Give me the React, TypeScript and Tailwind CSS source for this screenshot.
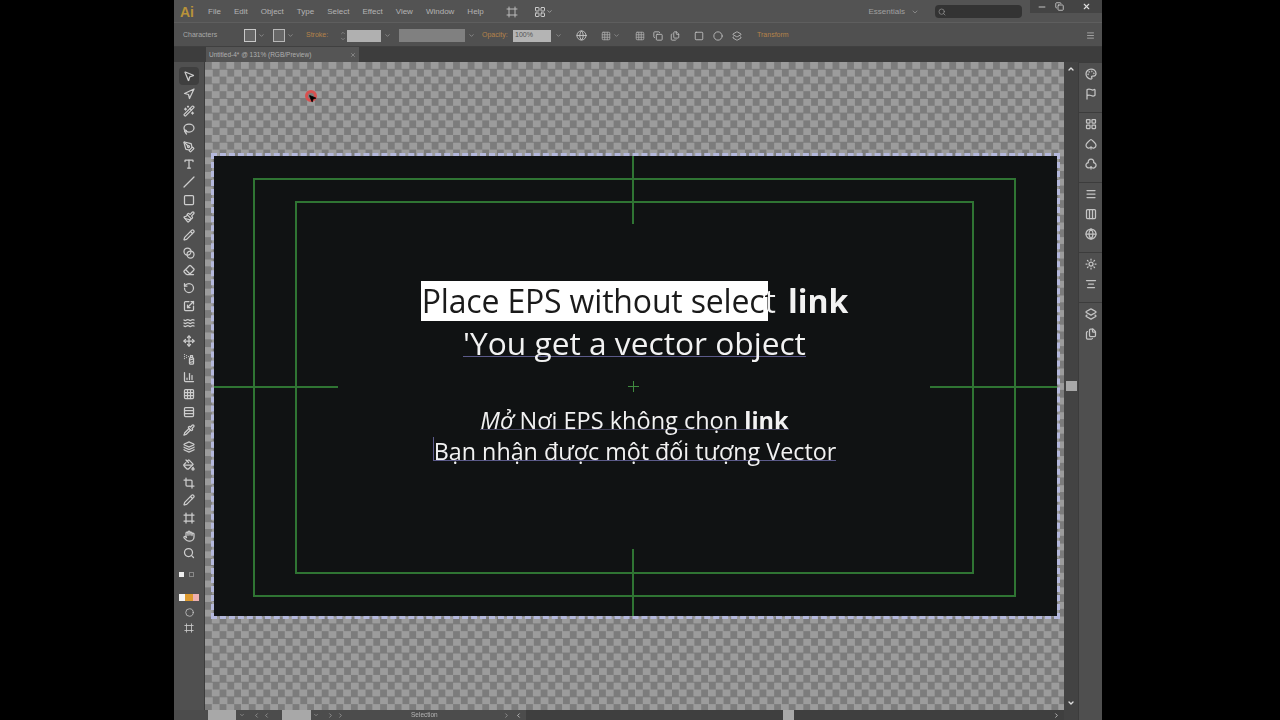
import {
  MousePointer2, Navigation, Wand2, Lasso, PenTool, Type, Slash, Square, Paintbrush, Pencil, Blend,
  Eraser, RotateCcw, Scaling, Waves, Move, SprayCan, BarChart3, Grid3x3, Rows3, Pipette, Layers, PaintBucket,
  Crop, Frame, Hand, Search, ChevronDown, Minus, X, Copy, Globe, LayoutGrid, ChevronLeft, ChevronRight,
  Circle, Palette, Flag, Spade, Club, Menu, Columns3, Sun, AlignCenter, Layers2, Files, ChevronUp,
} from "lucide-react";

const menus = ["File", "Edit", "Object", "Type", "Select", "Effect", "View", "Window", "Help"];

const tools = [
  MousePointer2, Navigation, Wand2, Lasso, PenTool, Type, Slash, Square, Paintbrush, Pencil, Blend, Eraser,
  RotateCcw, Scaling, Waves, Move, SprayCan, BarChart3, Grid3x3, Rows3, Pipette, Layers, PaintBucket, Crop,
  Pencil, Frame, Hand, Search,
];

const panelGroups = [
  [Palette, Flag],
  [LayoutGrid, Spade, Club],
  [Menu, Columns3, Globe],
  [Sun, AlignCenter],
  [Layers2, Files],
];

function MenuBar() {
  return (
    <div className="flex h-[22px] items-center bg-[#535353] pt-[1px] text-[8px] text-[#b4b4b4]">
      <span className="ml-[6px] w-[28px] text-[14px] font-bold leading-none text-[#b8923a]">Ai</span>
      <div className="flex gap-[13px]">
        {menus.map((m) => (
          <span key={m}>{m}</span>
        ))}
      </div>
      <Frame size={12} className="ml-[22px] text-[#bbbbbb]" />
      <LayoutGrid size={12} className="ml-[16px] text-[#cccccc]" />
      <ChevronDown size={7} className="text-[#cccccc]" />
      <span className="ml-auto text-[#a0a0a0]">Essentials</span>
      <ChevronDown size={8} className="ml-[6px] text-[#a0a0a0]" />
      <div className="ml-[16px] flex h-[13px] w-[87px] items-center rounded-sm bg-[#333333] pl-[3px]">
        <Search size={8} className="text-[#999999]" />
      </div>
      <div className="mb-[10px] ml-[8px] flex h-[13px] w-[72px] items-center bg-[#444444] text-[#dddddd]">
        <Minus size={10} className="ml-[7px]" />
        <Copy size={9} className="ml-[8px]" />
        <X size={9} strokeWidth={3} className="ml-[18px]" />
      </div>
    </div>
  );
}

function ControlBar() {
  return (
    <div className="flex h-[24px] items-center border-t border-[#5e5e5e] bg-[#505050] pt-[2px] text-[7px] text-[#a8a8a8]">
      <span className="ml-[9px] w-[61px]">Characters</span>
      <span className="h-[13px] w-[12px] border border-[#c8c8c8] bg-[#666666]" />
      <ChevronDown size={7} className="ml-[2px]" />
      <span className="ml-[8px] h-[13px] w-[12px] border border-[#b8b8b8] bg-[#666666]" />
      <ChevronDown size={7} className="ml-[2px]" />
      <span className="ml-[12px] w-[32px] text-[#b5834a]">Stroke:</span>
      <span className="flex w-[9px] flex-col items-center">
        <ChevronUp size={6} />
        <ChevronDown size={6} />
      </span>
      <span className="h-[12px] w-[34px] bg-[#b0b0b0]" />
      <ChevronDown size={7} className="ml-[3px]" />
      <span className="ml-[8px] h-[13px] w-[66px] bg-[#808080]" />
      <ChevronDown size={7} className="ml-[3px]" />
      <span className="ml-[7px] w-[31px] text-[#b5834a]">Opacity:</span>
      <span className="flex h-[12px] w-[38px] items-center bg-[#b4b4b4] pl-[2px] text-[#555555]">100%</span>
      <ChevronDown size={7} className="ml-[4px]" />
      <Globe size={11} className="ml-[14px] text-[#c4c4c4]" />
      <Grid3x3 size={10} className="ml-[14px]" />
      <ChevronDown size={7} className="ml-[2px]" />
      <Grid3x3 size={10} className="ml-[15px]" />
      <Copy size={10} className="ml-[8px] text-[#c4c4c4]" />
      <Files size={10} className="ml-[7px] text-[#c4c4c4]" />
      <Square size={10} className="ml-[14px] text-[#c4c4c4]" />
      <Circle size={10} className="ml-[9px] text-[#c4c4c4]" />
      <Layers2 size={10} className="ml-[9px] text-[#c4c4c4]" />
      <span className="ml-[15px] text-[#b5834a]">Transform</span>
      <Menu size={9} className="ml-auto mr-[7px] text-[#bbbbbb]" />
    </div>
  );
}

function TabBar() {
  return (
    <div className="flex h-[16px] items-end border-t border-[#404040] bg-[#3d3d3d]">
      <div className="ml-[32px] flex h-[15px] w-[153px] items-center justify-between bg-[#555555] px-[3px] text-[6.5px] text-[#b0b0b0]">
        <span>Untitled-4* @ 131% (RGB/Preview)</span>
        <X size={6} />
      </div>
    </div>
  );
}

function ToolBar() {
  return (
    <aside className="flex w-[31px] shrink-0 flex-col items-center border-r border-[#3c3c3c] bg-[#505050] pt-[5px] text-[#cdcdcd]">
      {tools.map((Icon, i) => (
        <div key={i} className={`flex h-[17.7px] w-[20px] shrink-0 items-center justify-center ${i === 0 ? "rounded-sm bg-[#3f3f3f]" : ""}`}>
          <Icon size={12} strokeWidth={2.5} />
        </div>
      ))}
      <div className="mt-[10px] flex h-[14px] w-[20px] items-start gap-[5px]">
        <span className="h-[5px] w-[5px] bg-[#eeeeee]" />
        <span className="h-[5px] w-[5px] border border-[#888888]" />
      </div>
      <div className="mt-[8px] flex h-[7px] w-[20px]">
        <span className="w-[6px] bg-[#f4f4f4]" />
        <span className="w-[8px] bg-[#dd9a2f]" />
        <span className="w-[6px] bg-[#eeb0b0]" />
      </div>
      <Circle size={9} className="mt-[7px]" />
      <Frame size={10} className="mt-[6px]" />
    </aside>
  );
}

function Artboard() {
  return (
    <div className="relative h-[466px] w-[849px] border-[3px] border-dashed border-[#b4b8dc] bg-[#101213] bg-clip-padding">
      {/* crop marks */}
      <span className="absolute left-[418px] top-0 h-[68px] w-[2px] bg-[#2f7433]" />
      <span className="absolute bottom-0 left-[418px] h-[67px] w-[2px] bg-[#2f7433]" />
      <span className="absolute left-0 top-[230px] h-[2px] w-[124px] bg-[#2f7433]" />
      <span className="absolute right-0 top-[230px] h-[2px] w-[127px] bg-[#2f7433]" />
      <span className="absolute left-[414px] top-[230px] h-px w-[11px] bg-[#3f8a3f]" />
      <span className="absolute left-[419px] top-[225px] h-[11px] w-px bg-[#3f8a3f]" />

      <div className="ml-[39px] mr-[41px] mt-[22px] border-2 border-[#2f7433] px-[40px] py-[21px]">
        <div className="h-[373px] border-2 border-[#2f7433] pt-[77px]">
          <div className="flex flex-col items-center text-center font-['Open_Sans',sans-serif] text-[#f2f2f2] blur-[0.3px]">
            <p className="flex h-[42px] items-center text-[32px] leading-none">
              <span className="flex h-[40px] items-center bg-white pl-[1px] tracking-[-0.17px] text-[#1a1a1a]">Place EPS without selec</span>
              <span className="flex h-[40px] items-center bg-[linear-gradient(90deg,#ffffff_30%,transparent_30%)]">
                <span className="bg-[linear-gradient(90deg,#1a1a1a_30%,#f2f2f2_30%)] bg-clip-text text-transparent">t</span>
              </span>
              <span className="ml-[12px] font-bold">link</span>
            </p>
            <p className="h-[35px] border-b border-[#5b5a8a] text-[31.7px] leading-[42px]">'You get a vector object</p>
            <p className="mt-[49px] h-[24px] border-b border-[#44435e] text-[23.5px] leading-[28px]">
              <i>Mở</i> Nơi EPS không chọn <b>link</b>
            </p>
            <p className="mt-[7px] h-[24px] border-b border-l border-[#5b5a8a] text-[23.3px] leading-[28px]">Bạn nhận được một đối tượng Vector</p>
          </div>
        </div>
      </div>
    </div>
  );
}

function Canvas() {
  return (
    <main className="relative min-w-0 flex-1 overflow-hidden bg-[repeating-conic-gradient(#9c9c9c_0_25%,#7c7c7c_0_50%)] bg-[length:14.6px_14.6px] pl-[6px] pt-[91px]">
      <Artboard />
      {/* mouse highlight */}
      <span className="absolute left-[100px] top-[28px] h-[12px] w-[12px] rounded-full border-[3px] border-[#d8504f]" />
      <MousePointer2 size={9} className="absolute left-[103px] top-[32px] fill-black text-black" />
    </main>
  );
}

function VScroll() {
  return (
    <div className="flex w-[14px] shrink-0 flex-col items-center bg-[#434343] text-[#dddddd]">
      <ChevronUp size={8} strokeWidth={4} className="mt-[3px]" />
      <span className="mt-[308px] h-[10px] w-[11px] bg-[#a8a8a8]" />
      <ChevronDown size={8} strokeWidth={4} className="mb-[3px] mt-auto" />
    </div>
  );
}

function PanelDock() {
  return (
    <aside className="flex w-[24px] shrink-0 flex-col items-center border-l border-[#3c3c3c] bg-[#4f4f4f] text-[#c4c4c4]">
      {panelGroups.map((group, i) => (
        <div key={i} className="mb-[7px] flex w-full shrink-0 flex-col items-center gap-[8px] border-t border-[#3c3c3c] py-[5px]">
          {group.map((Icon, j) => (
            <Icon key={j} size={12} strokeWidth={2.5} />
          ))}
        </div>
      ))}
    </aside>
  );
}

function StatusBar() {
  return (
    <div className="flex h-[10px] items-center bg-[#4c4c4c] text-[6.5px] text-[#b5b5b5]">
      <span className="ml-[34px] h-[10px] w-[28px] bg-[#a8a8a8]" />
      <ChevronDown size={6} className="ml-[3px]" />
      <ChevronLeft size={7} className="ml-[8px]" />
      <ChevronLeft size={7} className="ml-[3px]" />
      <span className="ml-[12px] h-[10px] w-[29px] bg-[#a8a8a8]" />
      <ChevronDown size={6} className="ml-[2px]" />
      <ChevronRight size={7} className="ml-[8px]" />
      <ChevronRight size={7} className="ml-[3px]" />
      <span className="ml-[67px] w-[92px]">Selection</span>
      <ChevronRight size={7} />
      <ChevronLeft size={7} className="ml-[5px] text-white" />
      <div className="ml-[4px] flex h-full flex-1 items-center bg-[#3f3f3f]">
        <span className="ml-[257px] h-full w-[11px] bg-[#a8a8a8]" />
        <ChevronRight size={7} className="ml-auto mr-[4px] text-white" />
      </div>
      <span className="h-full w-[14px] bg-[#434343]" />
      <span className="h-full w-[24px] border-l border-[#3c3c3c] bg-[#4f4f4f]" />
    </div>
  );
}

export default function App() {
  return (
    <div className="flex h-[720px] w-[1280px] overflow-hidden bg-black pl-[174px] font-['Liberation_Sans',sans-serif]">
      <div className="flex w-[928px] flex-col blur-[0.5px]">
        <MenuBar />
        <ControlBar />
        <TabBar />
        <div className="flex min-h-0 flex-1">
          <ToolBar />
          <Canvas />
          <VScroll />
          <PanelDock />
        </div>
        <StatusBar />
      </div>
    </div>
  );
}
